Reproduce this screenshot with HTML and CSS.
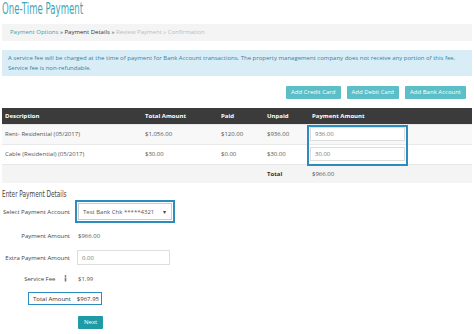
FILE: index.html
```html
<!DOCTYPE html>
<html lang="en">
<head>
  <meta charset="UTF-8" />
  <title>One-Time Payment</title>
  <link rel="stylesheet" href="styles.css">
</head>
<body>

  <div class="title-row">
    <h1 class="page-title">One-Time Payment</h1>
  </div>

  <div class="crumbs">
    <span class="crumb-link">Payment Options</span> &raquo;
    <span class="crumb-current">Payment Details</span> &raquo;
    <span class="crumb-todo">Review Payment &raquo; Confirmation</span>
  </div>

  <div class="alert">
    A service fee will be charged at the time of payment for Bank Account transactions. The property management company does not receive any portion of this fee.<br>
    Service fee is non-refundable.
  </div>

  <div class="actions">
    <a class="btn" href="#">Add Credit Card</a>
    <a class="btn" href="#">Add Debit Card</a>
    <a class="btn" href="#">Add Bank Account</a>
  </div>

  <table class="charges">
    <thead>
      <tr>
        <th class="col-desc">Description</th>
        <th class="col-total">Total Amount</th>
        <th class="col-paid">Paid</th>
        <th class="col-unpaid">Unpaid</th>
        <th class="col-pay">Payment Amount</th>
      </tr>
    </thead>
    <tbody>
      <tr class="row-odd">
        <td>Rent- Residential (05/2017)</td>
        <td>$1,056.00</td>
        <td>$120.00</td>
        <td>$936.00</td>
        <td class="pay-cell">
          <div class="highlight-pay"></div>
          <input class="amount-input" type="text" value="936.00">
        </td>
      </tr>
      <tr>
        <td>Cable (Residential) (05/2017)</td>
        <td>$30.00</td>
        <td>$0.00</td>
        <td>$30.00</td>
        <td class="pay-cell"><input class="amount-input" type="text" value="30.00"></td>
      </tr>
      <tr class="row-total">
        <td></td>
        <td></td>
        <td></td>
        <td><strong>Total</strong></td>
        <td class="total-value">$966.00</td>
      </tr>
    </tbody>
  </table>

  <h2 class="section-title">Enter Payment Details</h2>

  <div class="details">
    <div class="detail-row row-select">
      <span class="detail-label">Select Payment Account</span>
      <div class="select-wrap">
        <div class="fake-select">
          <span>Test Bank Chk *****4321</span>
          <span class="caret">&#9662;</span>
        </div>
      </div>
    </div>

    <div class="detail-row row-amount">
      <span class="detail-label">Payment Amount</span>
      <span class="detail-value">$966.00</span>
    </div>

    <div class="detail-row row-extra">
      <span class="detail-label">Extra Payment Amount</span>
      <input class="extra-input" type="text" value="0.00">
    </div>

    <div class="detail-row row-fee">
      <span class="detail-label">Service Fee
        <svg class="info-icon" width="5" height="7" viewBox="0 0 5 7">
          <circle cx="2.5" cy="1" r="0.9" fill="#777"/>
          <rect x="1.7" y="2.5" width="1.6" height="4" fill="#777"/>
        </svg>
      </span>
      <span class="detail-value">$1.99</span>
    </div>

    <div class="detail-row row-grand">
      <div class="grand-box">
        <span>Total Amount</span>
        <span>$967.95</span>
      </div>
    </div>

    <div class="next-row">
      <a class="btn btn-next" href="#">Next</a>
    </div>
  </div>

</body>
</html>
```

FILE: styles.css
```css
* { margin: 0; padding: 0; box-sizing: border-box; }

body {
  background: #fff;
  color: #555;
  font-family: 'Open Sans', sans-serif;
  font-size: 6px;
  padding: 0 2px;
  width: 474px;
}

.title-row {
  height: 18px;
}

.page-title {
  display: inline-block;
  font-family: 'DejaVu Sans', sans-serif;
  font-weight: normal;
  font-size: 16.5px;
  line-height: 18px;
  color: #3ea5b5;
  transform: scaleX(0.52);
  transform-origin: left center;
  white-space: nowrap;
}

.crumbs {
  margin-top: 6px;
  height: 17px;
  line-height: 17px;
  padding: 0 8px;
  background: #f4f4f4;
  color: #444;
}

.crumb-link { color: #3d9fb4; }
.crumb-current { color: #333; }
.crumb-todo { color: #bbb; }

.alert {
  margin-top: 9px;
  height: 26px;
  padding: 3px 6px;
  line-height: 10px;
  background: #d9edf7;
  color: #3a7f9c;
}

.actions {
  margin-top: 10px;
  display: flex;
  justify-content: flex-end;
  gap: 6px;
  padding-right: 6px;
}

.btn {
  display: inline-block;
  height: 13px;
  line-height: 13px;
  padding: 0 5px;
  background: #5cbec7;
  color: #fff;
  text-decoration: none;
  border-radius: 1px;
}

.charges {
  margin-top: 9px;
  width: 470px;
  border-collapse: collapse;
}

.charges th {
  background: #3b3b3b;
  color: #fff;
  font-weight: bold;
  text-align: left;
  height: 16px;
  padding: 0 3px;
}

.col-desc { width: 140px; }
.col-total { width: 76px; }
.col-paid { width: 46px; }
.col-unpaid { width: 45px; }

.charges td {
  height: 20px;
  padding: 0 3px;
  color: #555;
  border-top: 1px solid #e8e8e8;
}

.row-odd td { background: #f8f8f8; }

.row-total td {
  background: #f4f4f4;
  height: 19px;
}

.row-total strong { color: #333; }

.pay-cell {
  position: relative;
  padding-left: 1px !important;
}

.amount-input {
  display: block;
  width: 95px;
  height: 14px;
  border: 1px solid #ddd;
  background: #fff;
  font-family: 'Open Sans', sans-serif;
  font-size: 6px;
  color: #777;
  padding: 0 4px;
}

.highlight-pay {
  position: absolute;
  left: -2px;
  top: 0;
  width: 101px;
  height: 41px;
  border: 2px solid #2c8cbf;
  pointer-events: none;
}

.total-value { padding-left: 3px !important; }

.section-title {
  margin-top: 6px;
  height: 11px;
  line-height: 11px;
  font-family: 'DejaVu Sans', sans-serif;
  font-weight: normal;
  font-size: 8.5px;
  color: #444;
  transform: scaleX(0.68);
  transform-origin: left center;
  white-space: nowrap;
}

.detail-row {
  display: flex;
  align-items: center;
  gap: 8px;
}

.detail-label {
  width: 68px;
  text-align: right;
  color: #444;
  white-space: nowrap;
}

.detail-value { color: #555; }

.row-select { height: 23px; }
.row-amount { height: 26px; }
.row-extra { height: 17px; }
.row-fee { height: 26px; }
.row-grand { height: 13px; }

.select-wrap {
  border: 2px solid #2c8cbf;
  padding: 1px;
  width: 100px;
  height: 23px;
  margin-left: -3px;
}

.fake-select {
  height: 100%;
  border: 1px solid #ccc;
  display: flex;
  justify-content: space-between;
  align-items: center;
  padding: 0 5px 0 4px;
  color: #555;
}

.caret { font-size: 6px; color: #444; }

.extra-input {
  width: 93px;
  height: 15px;
  border: 1px solid #ddd;
  background: #fff;
  font-family: 'Open Sans', sans-serif;
  font-size: 6px;
  color: #777;
  padding: 0 4px;
  margin-left: -1px;
}

.info-icon {
  margin-left: 6px;
  margin-right: 2px;
  vertical-align: -1px;
}

.grand-box {
  margin-left: 26px;
  width: 74px;
  height: 13px;
  border: 1.5px solid #2c8cbf;
  display: flex;
  justify-content: space-between;
  align-items: center;
  padding: 0 2px 0 4px;
  color: #333;
}

.next-row {
  margin-top: 11px;
  padding-left: 76px;
}

.btn-next {
  background: #1f9ba6;
  padding: 0 6px;
  height: 13px;
  line-height: 13px;
}
```
